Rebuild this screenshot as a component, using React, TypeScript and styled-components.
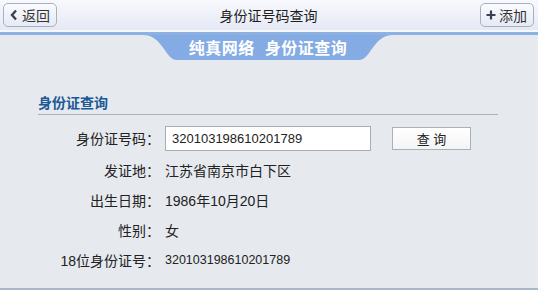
import { styled, createGlobalStyle } from 'styled-components'

const GlobalStyle = createGlobalStyle`
  html, body {
    margin: 0;
    padding: 0;
    background: #e6e9ee;
  }
  body {
    font-family: 'Liberation Sans', 'Noto Sans CJK SC', sans-serif;
    color: #222;
  }
`

const Page = styled.div`
  width: 538px;
  height: 290px;
  box-sizing: border-box;
  background: #e6e9ee;
  border-bottom: 2px solid #a9b8c6;
  overflow: hidden;
`

const Header = styled.header`
  height: 32px;
  box-sizing: border-box;
  display: flex;
  align-items: center;
  justify-content: space-between;
  padding: 0 4px 0 3px;
  background: linear-gradient(#f8f9fd, #e5e9f5);
  border-bottom: 2px solid #f6f8fc;
`

const Title = styled.h1`
  margin: 0;
  font-size: 14px;
  font-weight: normal;
  color: #1e1e1e;
`

const NavButton = styled.button`
  height: 24px;
  padding: 0 6px 0 5px;
  display: flex;
  align-items: center;
  gap: 3px;
  border: 1px solid #a9b0c2;
  border-radius: 5px;
  background: linear-gradient(#fafbfe, #e6eaf4);
  font-family: inherit;
  font-size: 14px;
  color: #333;
  cursor: pointer;
`

const Banner = styled.div`
  border-top: 3px solid #8db2e1;
  display: flex;
  justify-content: center;
`

const Tab = styled.div`
  width: 250px;
  height: 25px;
  margin-left: -2px;
  display: flex;
  align-items: center;
  justify-content: center;
  background: #84abe3;
  clip-path: path('M0 0 C 20 0, 22 25, 34 25 L 216 25 C 228 25, 230 0, 250 0 Z');
  color: #fff;
  font-size: 16px;
  font-weight: bold;
  letter-spacing: 0.5px;
  padding-bottom: 2px;
  box-sizing: border-box;
`

const Section = styled.section`
  margin-top: 34px;
`

const SectionTitle = styled.h2`
  margin: 0 40px 8px 38px;
  padding-bottom: 2px;
  font-size: 14px;
  line-height: 18px;
  font-weight: bold;
  color: #1b5896;
  border-bottom: 1px solid #a8b3c0;
`

const Row = styled.div<{ $first?: boolean }>`
  height: ${(p) => (p.$first ? 30 : 30)}px;
  margin-bottom: ${(p) => (p.$first ? 2 : 0)}px;
  display: flex;
  align-items: center;
  gap: 5px;
`

const Label = styled.div`
  width: 160px;
  text-align: right;
  font-size: 14px;
  color: #222;
`

const Value = styled.div<{ $small?: boolean }>`
  font-size: ${(p) => (p.$small ? 12.5 : 14)}px;
  color: #222;
`

const Input = styled.input`
  width: 206px;
  height: 25px;
  box-sizing: border-box;
  border: 1px solid #a5adb7;
  background: #fff;
  padding: 0 6px;
  font-family: 'Liberation Sans', sans-serif;
  font-size: 13px;
  color: #222;
  outline: none;
`

const QueryButton = styled.button`
  width: 79px;
  height: 23px;
  margin-left: 16px;
  border: 1px solid #a9b0b8;
  background: linear-gradient(#ffffff, #f3f4f6);
  font-family: inherit;
  font-size: 13px;
  color: #222;
  cursor: pointer;
`

const Chevron = () => (
  <svg width="10" height="12" viewBox="0 0 10 12">
    <path d="M7 1.5 L3 6 L7 10.5" fill="none" stroke="#3a4150" strokeWidth="2.4" />
  </svg>
)

const Plus = () => (
  <svg width="10" height="10" viewBox="0 0 10 10">
    <path d="M5 0.5 V9.5 M0.5 5 H9.5" stroke="#3a4150" strokeWidth="2.2" />
  </svg>
)

const App = () => {
  const idNumber = '320103198610201789'
  return (
    <>
      <GlobalStyle />
      <Page>
        <Header>
          <NavButton>
            <Chevron />
            返回
          </NavButton>
          <Title>身份证号码查询</Title>
          <NavButton>
            <Plus />
            添加
          </NavButton>
        </Header>
        <Banner>
          <Tab>纯真网络&nbsp;&nbsp;身份证查询</Tab>
        </Banner>
        <Section>
          <SectionTitle>身份证查询</SectionTitle>
          <Row $first>
            <Label>身份证号码：</Label>
            <Input defaultValue={idNumber} />
            <QueryButton>查 询</QueryButton>
          </Row>
          <Row>
            <Label>发证地：</Label>
            <Value>江苏省南京市白下区</Value>
          </Row>
          <Row>
            <Label>出生日期：</Label>
            <Value>1986年10月20日</Value>
          </Row>
          <Row>
            <Label>性别：</Label>
            <Value>女</Value>
          </Row>
          <Row>
            <Label>18位身份证号：</Label>
            <Value $small>{idNumber}</Value>
          </Row>
        </Section>
      </Page>
    </>
  )
}

export default App
